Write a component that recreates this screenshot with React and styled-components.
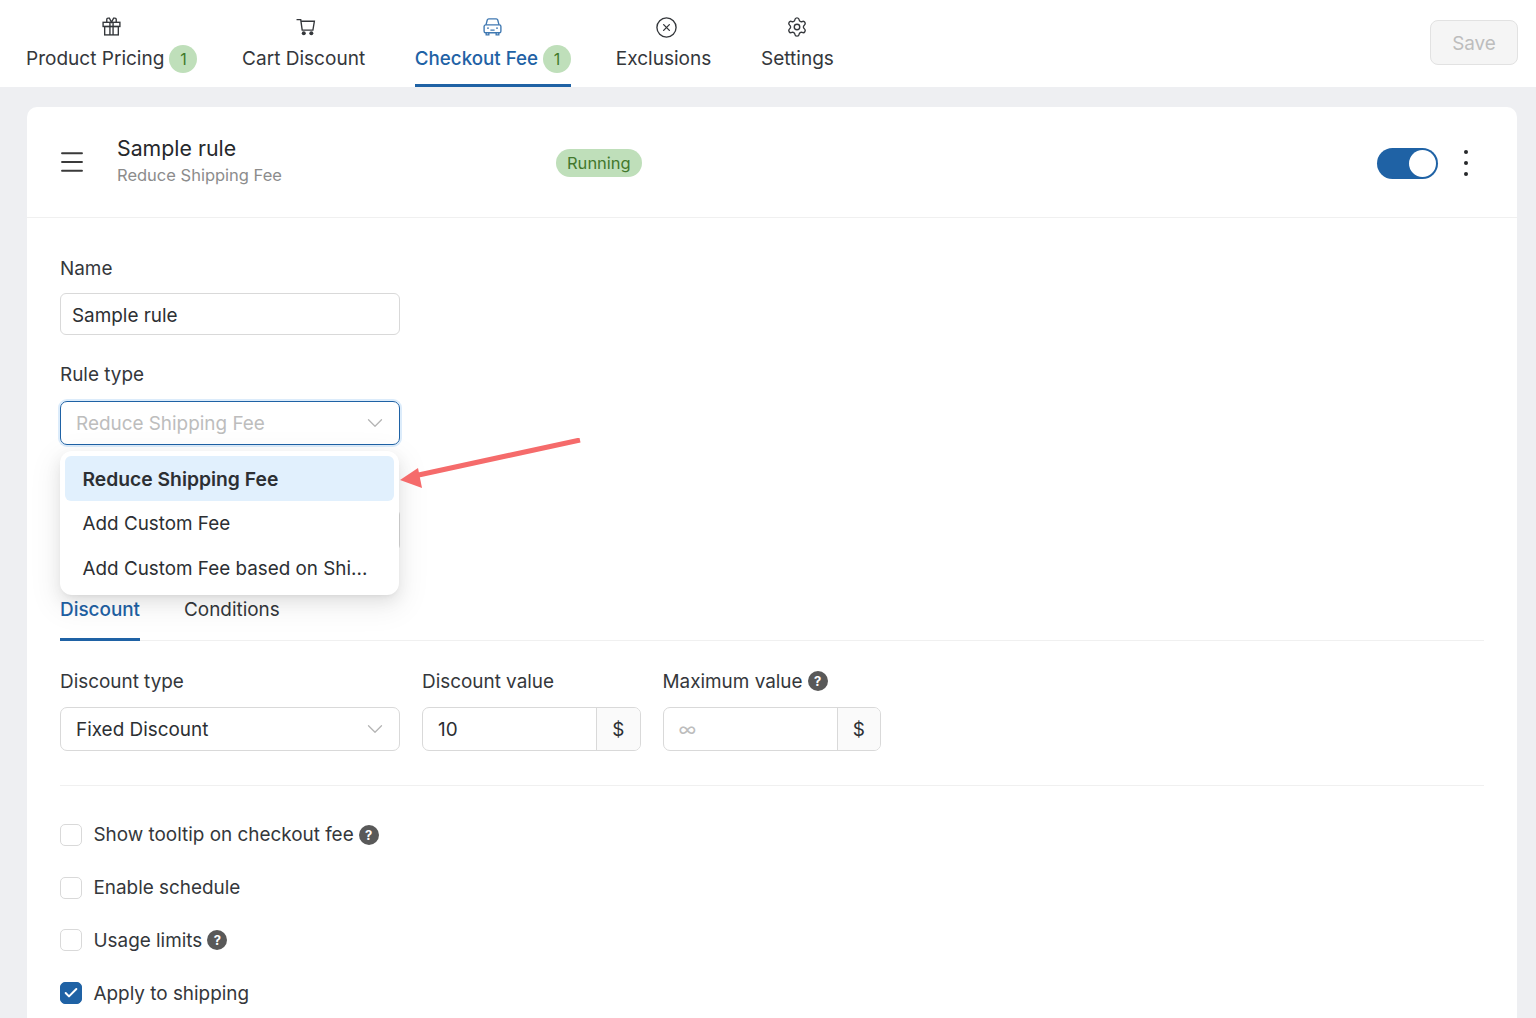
import React from 'react';
import styled, { createGlobalStyle } from 'styled-components';
import { CircleX, Settings, Menu, ChevronDown, Check } from 'lucide-react';

const Global = createGlobalStyle`
  html, body { margin: 0; padding: 0; background: #eeeff2; }
  body { font-family: Inter, "Liberation Sans", sans-serif; color: #2c2f33; overflow: hidden; height: 1018px; }
  * { box-sizing: border-box; }
`;

const TopBar = styled.header`
  height: 87px;
  background: #fff;
  display: flex;
  justify-content: space-between;
  padding: 0 18px 0 26px;
`;
const Tabs = styled.nav`
  display: flex;
  gap: 49.7px;
`;
const Tab = styled.div`
  height: 87px;
  padding-top: 16px;
  margin-right: ${(p) => (p.$hasCount ? -5 : 0)}px;
  display: flex;
  flex-direction: column;
  align-items: center;
  gap: 8px;
  color: ${(p) => (p.$active ? '#1f62a5' : '#34373b')};
  font-weight: ${(p) => (p.$active ? 500 : 400)};
  font-size: ${(p) => (p.$active ? 18.75 : 19.05)}px;
  border-bottom: 3px solid ${(p) => (p.$active ? '#1f62a5' : 'transparent')};
`;
const TabIcon = styled.span`
  height: 21px;
  display: flex;
  margin-left: ${(p) => p.$nudge || 0}px;
`;
const TabLabel = styled.div`
  display: flex;
  align-items: center;
  gap: 5px;
  line-height: 28px;
  white-space: nowrap;
`;
const Count = styled.span`
  width: 28px;
  height: 28px;
  border-radius: 50%;
  background: #bfdfba;
  color: #3f7a2b;
  font-size: 16px;
  font-weight: 400;
  display: flex;
  align-items: center;
  justify-content: center;
`;
const SaveButton = styled.button`
  width: 88px;
  height: 45px;
  margin-top: 20px;
  padding: 2px 0 0;
  background: #f5f5f5;
  border: 1px solid #e2e2e2;
  border-radius: 8px;
  color: #bdbdbd;
  font: 400 18.9px Inter, sans-serif;
`;

const Page = styled.main`
  padding: 20px 19px 0 27px;
`;
const Card = styled.section`
  background: #fff;
  border-radius: 10px 10px 0 0;
`;
const CardHeader = styled.div`
  height: 111px;
  padding: 0 33px;
  display: flex;
  align-items: center;
  border-bottom: 1px solid #f0f0f0;
`;
const MenuIcon = styled(Menu)`
  width: 30px;
  height: 30px;
  color: #3a3a3a;
  stroke-width: 1.5;
  margin: 0 30px 0 -3px;
`;
const TitleBlock = styled.div`
  width: 439px;
  margin-top: -4px;
`;
const Title = styled.div`
  font-size: 21.3px;
  line-height: 30px;
  color: #26282b;
`;
const Subtitle = styled.div`
  font-size: 16.5px;
  line-height: 24px;
  color: #8c8c8c;
`;
const Status = styled.span`
  height: 28px;
  margin-top: 2px;
  padding: 0 11px;
  border-radius: 14px;
  background: #bfdfba;
  color: #43782d;
  font-size: 16.5px;
  display: flex;
  align-items: center;
`;
const HeaderActions = styled.div`
  margin: 2px 16px 0 auto;
  display: flex;
  align-items: center;
  gap: 26px;
`;
const Toggle = styled.span`
  width: 61px;
  height: 31px;
  border-radius: 16px;
  background: #1f62a5;
  display: flex;
  justify-content: flex-end;
  padding: 2px;
`;
const Knob = styled.span`
  width: 27px;
  height: 27px;
  border-radius: 50%;
  background: #fff;
`;
const Kebab = styled.span`
  display: flex;
  flex-direction: column;
  gap: 7px;
`;
const Dot = styled.span`
  width: 4px;
  height: 4px;
  border-radius: 50%;
  background: #26282b;
`;

const CardBody = styled.div`
  padding: 35px 33px 0;
`;
const Field = styled.div`
  width: ${(p) => p.$width || 340}px;
`;
const FormStack = styled.div`
  display: flex;
  flex-direction: column;
  gap: 24px;
`;
const Label = styled.label`
  height: 30px;
  margin-bottom: ${(p) => p.$gap || 11}px;
  display: flex;
  align-items: center;
  gap: 5px;
  font-size: 18.9px;
  color: #34373b;
`;
const TextBox = styled.div`
  height: 42px;
  padding: 2px 11px 0;
  border: 1px solid #d9d9d9;
  border-radius: 6px;
  display: flex;
  align-items: center;
  font-size: 18.9px;
  color: #2c2f33;
`;
const SelectWrap = styled.div`
  position: relative;
`;
const Select = styled.div`
  height: 44px;
  padding: 0 15px;
  border: 1px solid ${(p) => (p.$open ? '#1f62a5' : '#d9d9d9')};
  border-radius: 7px;
  box-shadow: ${(p) => (p.$open ? '0 0 0 2px #dcecfb' : 'none')};
  display: flex;
  align-items: center;
  justify-content: space-between;
  font-size: 18.9px;
  color: ${(p) => (p.$open ? '#bdbdbd' : '#2c2f33')};
`;
const Chevron = styled(ChevronDown)`
  width: 20px;
  height: 20px;
  color: #b5b5b5;
  stroke-width: 1.2;
  transform: scale(1.3, 1.3);
  margin-right: -1px;
`;
const Dropdown = styled.div`
  position: absolute;
  z-index: 5;
  left: 0;
  top: calc(100% + 6px);
  width: 339px;
  height: 144px;
  padding: 5px;
  background: #fff;
  border-radius: 12px;
  box-shadow: 0 6px 16px rgba(0, 0, 0, 0.08), 0 3px 6px -4px rgba(0, 0, 0, 0.12), 0 9px 28px 8px rgba(0, 0, 0, 0.05);
`;
const Option = styled.div`
  height: 44.5px;
  padding: 2px 17.5px 0;
  border-radius: 6px;
  display: flex;
  align-items: center;
  white-space: nowrap;
  font-size: ${(p) => (p.$selected ? 19.3 : 18.85)}px;
  font-weight: ${(p) => (p.$selected ? 600 : 400)};
  background: ${(p) => (p.$selected ? '#e1f0fd' : 'transparent')};
  color: #2c2f33;
`;
const Arrow = styled.svg`
  position: absolute;
  z-index: 6;
  left: 340px;
  top: 37px;
  width: 190px;
  height: 60px;
`;

const InnerTabs = styled.div`
  height: 50px;
  margin-top: 40px;
  display: flex;
  gap: 44px;
  border-bottom: 1px solid #f0f0f0;
`;
const InnerTab = styled.div`
  height: 50px;
  padding-top: 4px;
  font-size: 18.9px;
  line-height: 30px;
  color: ${(p) => (p.$active ? '#1f62a5' : '#34373b')};
  font-weight: ${(p) => (p.$active ? 500 : 400)};
  border-bottom: 3px solid ${(p) => (p.$active ? '#1f62a5' : 'transparent')};
`;
const DiscountRow = styled.div`
  display: flex;
  gap: 22px;
  padding: 25px 0 34px;
  border-bottom: 1px solid #f0f0f0;
`;
const InputGroup = styled.div`
  height: 44px;
  display: flex;
  border: 1px solid #d9d9d9;
  border-radius: 7px;
  overflow: hidden;
  font-size: 18.9px;
`;
const GroupValue = styled.div`
  flex: 1;
  padding: 0 15px;
  display: flex;
  align-items: center;
  color: ${(p) => (p.$muted ? '#bdbdbd' : '#2c2f33')};
`;
const Addon = styled.div`
  width: 43.5px;
  background: #fafafa;
  border-left: 1px solid #d9d9d9;
  display: flex;
  align-items: center;
  justify-content: center;
`;
const Help = styled.span`
  width: 20px;
  height: 20px;
  border-radius: 50%;
  background: #595959;
  color: #fff;
  font-size: 13px;
  font-weight: 700;
  display: inline-flex;
  align-items: center;
  justify-content: center;
`;
const CheckList = styled.div`
  padding-top: 22.5px;
`;
const CheckRow = styled.div`
  height: 52.8px;
  display: flex;
  align-items: center;
  gap: 11.5px;
  font-size: 18.9px;
  color: #34373b;
`;
const Box = styled.span`
  width: 22px;
  height: 22px;
  border-radius: 5px;
  border: 1px solid ${(p) => (p.$checked ? '#1f62a5' : '#d9d9d9')};
  background: ${(p) => (p.$checked ? '#1f62a5' : '#fff')};
  color: #fff;
  display: flex;
  align-items: center;
  justify-content: center;
`;
const CheckText = styled.span`
  display: flex;
  align-items: center;
  gap: 5px;
`;

const GiftIcon = () => (
  <svg width="21" height="21" viewBox="0 0 20 20" fill="none" stroke="currentColor" strokeWidth="1.3">
    <rect x="2" y="6" width="16" height="4" />
    <rect x="3.5" y="10" width="13" height="8" />
    <path d="M8.5 6v12M11.5 6v12" />
    <path d="M5.5 6V3.2A1.2 1.2 0 0 1 6.7 2H8l2 4 2-4h1.3a1.2 1.2 0 0 1 1.2 1.2V6" />
  </svg>
);

const CartIcon = () => (
  <svg width="21" height="21" viewBox="0 0 20 20" fill="none" stroke="currentColor" strokeWidth="1.3">
    <path d="M0.5 3.5h4l1.4 10h10.2l1.4-8.5H4.9M5.9 13.5h10.2" />
    <circle cx="7.4" cy="16.4" r="1.9" fill="currentColor" stroke="none" />
    <circle cx="14.6" cy="16.4" r="1.9" fill="currentColor" stroke="none" />
  </svg>
);

const CarIcon = () => (
  <svg width="21" height="21" viewBox="0 0 20 20" fill="none" stroke="currentColor" strokeWidth="1.3" opacity="0.85">
    <path d="M3.8 8.5 5 3.8A1.5 1.5 0 0 1 6.5 2.7h7A1.5 1.5 0 0 1 15 3.8l1.2 4.7" />
    <rect x="2" y="8.5" width="16" height="7.5" rx="1.5" />
    <path d="M4 16v2h2.5v-2M13.5 16v2H16v-2M4.8 11.5h1.8M13.4 11.5h1.8M8 13.5h4" />
  </svg>
);

const tabs = [
  { icon: <GiftIcon />, label: 'Product Pricing', count: 1 },
  { icon: <CartIcon />, nudge: 5, label: 'Cart Discount' },
  { icon: <CarIcon />, label: 'Checkout Fee', count: 1, active: true },
  { icon: <CircleX size={23} strokeWidth={1.4} />, nudge: 5, label: 'Exclusions' },
  { icon: <Settings size={22} strokeWidth={1.5} />, label: 'Settings' },
];

const options = [
  { label: 'Show tooltip on checkout fee', help: true },
  { label: 'Enable schedule' },
  { label: 'Usage limits', help: true },
  { label: 'Apply to shipping', checked: true },
];

export default function App() {
  return (
    <>
      <Global />
      <TopBar>
        <Tabs>
          {tabs.map((t) => (
            <Tab key={t.label} $active={t.active} $hasCount={!!t.count}>
              <TabIcon $nudge={t.nudge}>{t.icon}</TabIcon>
              <TabLabel>
                {t.label}
                {t.count && <Count>{t.count}</Count>}
              </TabLabel>
            </Tab>
          ))}
        </Tabs>
        <SaveButton>Save</SaveButton>
      </TopBar>
      <Page>
        <Card>
          <CardHeader>
            <MenuIcon />
            <TitleBlock>
              <Title>Sample rule</Title>
              <Subtitle>Reduce Shipping Fee</Subtitle>
            </TitleBlock>
            <Status>Running</Status>
            <HeaderActions>
              <Toggle>
                <Knob />
              </Toggle>
              <Kebab>
                <Dot />
                <Dot />
                <Dot />
              </Kebab>
            </HeaderActions>
          </CardHeader>
          <CardBody>
            <FormStack>
              <Field>
                <Label $gap={10}>Name</Label>
                <TextBox>Sample rule</TextBox>
              </Field>
              <Field>
                <Label $gap={12}>Rule type</Label>
                <SelectWrap>
                  <Select $open>
                    Reduce Shipping Fee
                    <Chevron />
                  </Select>
                  <Dropdown>
                    <Option $selected>Reduce Shipping Fee</Option>
                    <Option>Add Custom Fee</Option>
                    <Option>Add Custom Fee based on Shi...</Option>
                  </Dropdown>
                  <Arrow viewBox="0 0 190 60">
                    <line x1="180" y1="2" x2="14" y2="38" stroke="#f56b6b" strokeWidth="5" />
                    <polygon points="0,42 18,30 22,50" fill="#f56b6b" />
                  </Arrow>
                </SelectWrap>
              </Field>
              <Field>
                <Label $gap={10} />
                <TextBox />
              </Field>
            </FormStack>
            <InnerTabs>
              <InnerTab $active>Discount</InnerTab>
              <InnerTab>Conditions</InnerTab>
            </InnerTabs>
            <DiscountRow>
              <Field>
                <Label>Discount type</Label>
                <Select>
                  Fixed Discount
                  <Chevron />
                </Select>
              </Field>
              <Field $width={218.5}>
                <Label>Discount value</Label>
                <InputGroup>
                  <GroupValue>10</GroupValue>
                  <Addon>$</Addon>
                </InputGroup>
              </Field>
              <Field $width={218.5}>
                <Label>
                  Maximum value <Help>?</Help>
                </Label>
                <InputGroup>
                  <GroupValue $muted>∞</GroupValue>
                  <Addon>$</Addon>
                </InputGroup>
              </Field>
            </DiscountRow>
            <CheckList>
              {options.map((o) => (
                <CheckRow key={o.label}>
                  <Box $checked={o.checked}>{o.checked && <Check size={16} strokeWidth={3} />}</Box>
                  <CheckText>
                    {o.label}
                    {o.help && <Help>?</Help>}
                  </CheckText>
                </CheckRow>
              ))}
            </CheckList>
          </CardBody>
        </Card>
      </Page>
    </>
  );
}
